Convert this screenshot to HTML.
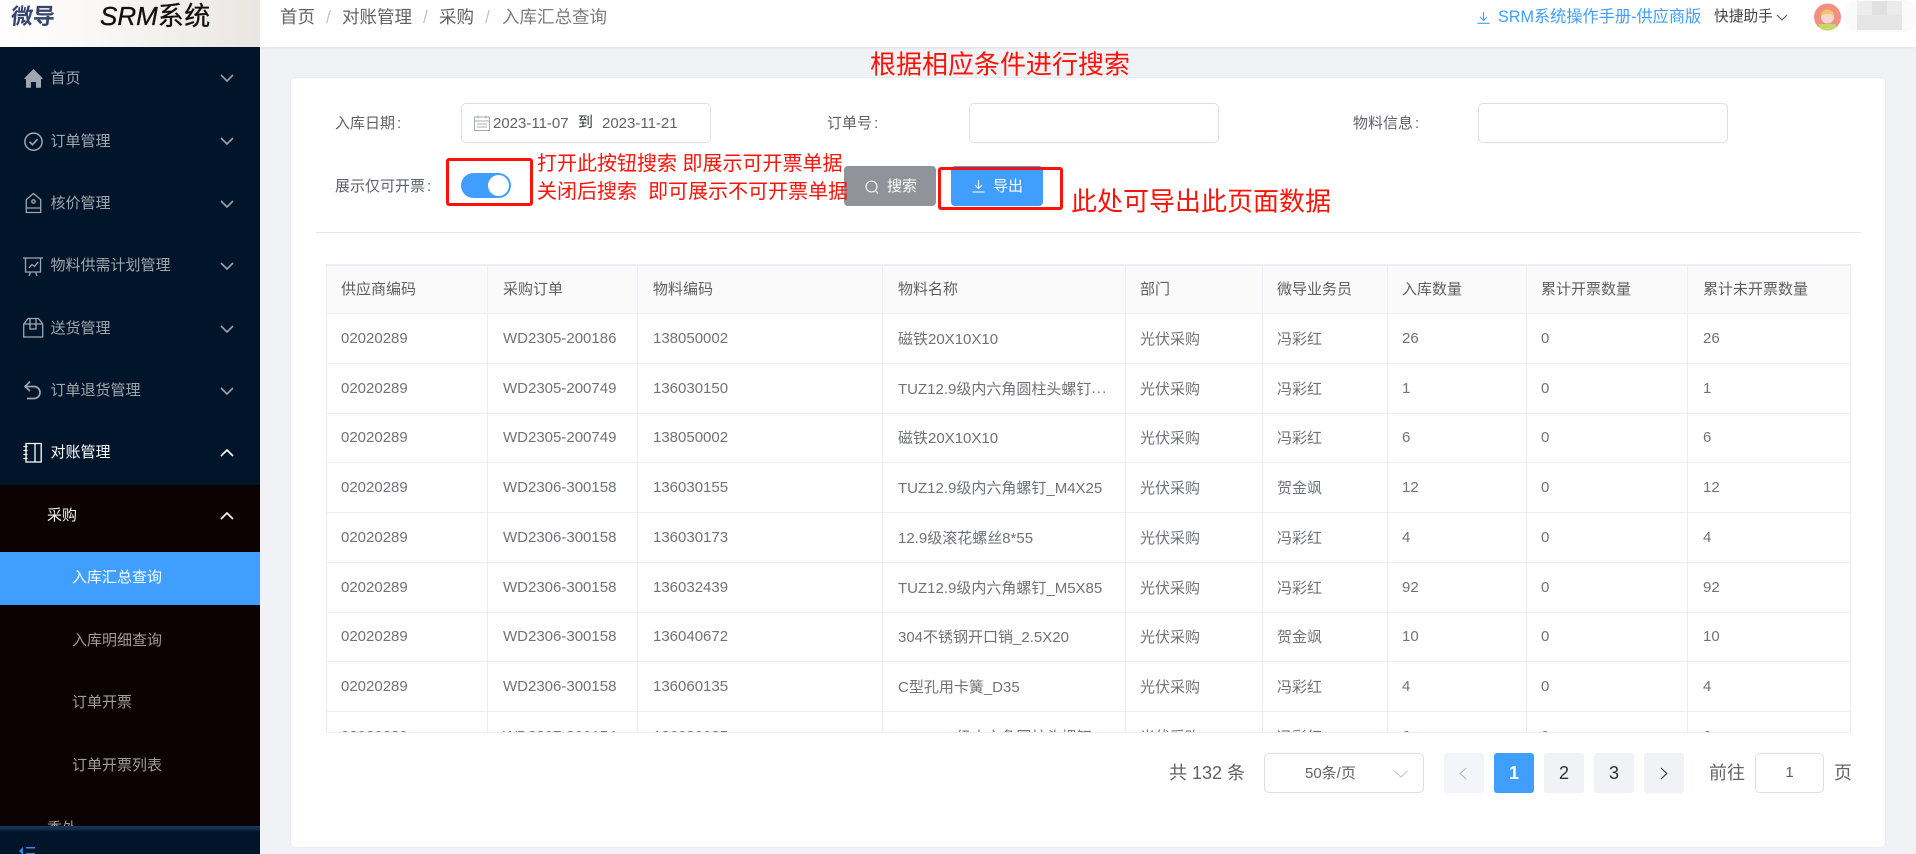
<!DOCTYPE html>
<html lang="zh"><head><meta charset="utf-8"><title>入库汇总查询</title>
<style>
*{box-sizing:border-box;margin:0;padding:0}
html,body{width:1916px;height:854px;overflow:hidden;background:#f0f2f6;font-family:"Liberation Sans","Noto Sans CJK SC",sans-serif;font-size:15px;color:#606266}
.a{position:absolute;white-space:nowrap}
.t{position:absolute;white-space:nowrap;line-height:20px;transform:translateY(-50%)}
#side{position:absolute;left:0;top:47px;width:260px;height:807px;background:#00142a;overflow:hidden}
.sub{position:absolute;left:0;top:438px;width:260px;height:369px;background:#0c0203}
.act{position:absolute;left:0;top:505px;width:260px;height:53px;background:#409eff}
.m{color:#a0a6ae}
.chev{position:absolute;left:220px;width:14px;height:8px;fill:none;stroke:#9ea3aa;stroke-width:1.6}
.ic{position:absolute;left:23px;width:22px;height:22px;fill:none;stroke:#a0a6ae;stroke-width:1.3}
.inp{position:absolute;height:40px;background:#fff;border:1px solid #dcdfe6;border-radius:5px}
.red{position:absolute;border:3px solid #fb1309;border-radius:3px}
.rt{position:absolute;white-space:nowrap;color:#fb1309;transform:translateY(-50%);line-height:1.2}
.btn{position:absolute;top:166px;width:92px;height:40px;border-radius:4px}
.row{position:absolute;left:0;width:1525px;border-bottom:1px solid #ebeef5;height:49.75px}
.c{position:absolute;top:0;bottom:0;border-left:1px solid #ebeef5;padding-left:14px;white-space:nowrap;overflow:hidden;display:flex;align-items:center;color:#707276;font-size:15px}
.c:nth-child(1){left:0;width:161px}.c:nth-child(2){left:161px;width:150px;padding-left:15px}.c:nth-child(3){left:311px;width:245px;padding-left:15px}.c:nth-child(4){left:556px;width:243px;padding-left:15px}.c:nth-child(5){left:799px;width:137px}.c:nth-child(6){left:936px;width:125px}.c:nth-child(7){left:1061px;width:139px}.c:nth-child(8){left:1200px;width:161px}.c:nth-child(9){left:1361px;width:164px;padding-left:15px;border-right:1px solid #ebeef5}
.h{background:#fafafa;height:48px;top:0}.h .c{color:#5d5f63;padding-bottom:2px}
.pg{position:absolute;top:753px;width:40px;height:40px;border-radius:3px;background:#f0f2f5;text-align:center;line-height:40px;font-size:18px;color:#303133;font-weight:500}
.col{margin-left:2px}
</style></head><body>

<!-- header -->
<div class="a" style="left:0;top:0;width:1916px;height:47px;background:#fff;box-shadow:0 1px 3px rgba(0,21,41,.08)"></div>
<div class="a" style="left:0;top:0;width:260px;height:47px;background:linear-gradient(90deg,#fff 0%,#f7f6f4 45%,#e9e6e2 100%)"></div>
<div class="t" style="left:11px;top:17px;font-size:22px;font-weight:700;color:#34466f;transform:translateY(-50%) skewX(-6deg)">微导</div>
<div class="t" style="left:100px;top:15.5px;font-size:26px;color:#111;line-height:30px;-webkit-text-stroke:.3px #111"><span style="font-style:italic">SRM</span><span style="letter-spacing:.5px">系统</span></div>

<div class="t" style="left:280px;top:17px;font-size:17.5px;color:#606266">首页</div>
<div class="t" style="left:326px;top:17px;font-size:17.5px;color:#c0c4cc">/</div>
<div class="t" style="left:342px;top:17px;font-size:17.5px;color:#606266">对账管理</div>
<div class="t" style="left:423px;top:17px;font-size:17.5px;color:#c0c4cc">/</div>
<div class="t" style="left:439px;top:17px;font-size:17.5px;color:#606266">采购</div>
<div class="t" style="left:485px;top:17px;font-size:17.5px;color:#c0c4cc">/</div>
<div class="t" style="left:502px;top:17px;font-size:17.5px;color:#7b7d82">入库汇总查询</div>

<svg class="a" style="left:1477px;top:11px;width:13px;height:13px" viewBox="0 0 13 13" fill="none" stroke="#409eff" stroke-width="1.1"><path d="M6.500 1v8M3 6l3.500 3.500L10 6M.5 12.300h12"/></svg>
<div class="t" style="left:1498px;top:17px;font-size:16.2px;color:#409eff">SRM系统操作手册-供应商版</div>
<div class="t" style="left:1714px;top:17px;font-size:14.7px;color:#444">快捷助手</div>
<svg class="a" style="left:1776px;top:14px;width:12px;height:8px" viewBox="0 0 12 8" fill="none" stroke="#555" stroke-width="1"><path d="M1 1l5 5 5-5"/></svg>
<svg class="a" style="left:1814px;top:3px;width:27px;height:28px" viewBox="0 0 27 28"><defs><clipPath id="av"><circle cx="13.500" cy="14" r="13.500"/></clipPath></defs><g clip-path="url(#av)"><rect width="27" height="28" fill="#f0917f"/><rect x="5" y="21" width="17" height="8" fill="#c5d96b"/><circle cx="13.500" cy="14" r="6.500" fill="#f7d7cd"/><path d="M7 13a6.500 6.500 0 0 1 13 0c-3-3-9-3-13 0z" fill="#f5c56b"/></g></svg>
<div class="a" style="left:1845px;top:0;width:71px;height:32px;background:#fafafa;border-radius:12px"></div>
<div class="a" style="left:1857px;top:1px;width:15px;height:14px;background:#ededed"></div>
<div class="a" style="left:1872px;top:1px;width:15px;height:14px;background:#e0e0e0"></div>
<div class="a" style="left:1887px;top:1px;width:15px;height:14px;background:#ebebeb"></div>
<div class="a" style="left:1857px;top:15px;width:45px;height:15px;background:#e6e6e6"></div>

<!-- sidebar -->
<div id="side">
<div class="sub"></div><div class="act"></div>
<div class="t m" style="left:50.500px;top:31.500px">首页</div>
<div class="t m" style="left:50.500px;top:94.500px">订单管理</div>
<div class="t m" style="left:50.500px;top:156.500px">核价管理</div>
<div class="t m" style="left:50.500px;top:219px">物料供需计划管理</div>
<div class="t m" style="left:50.500px;top:281.500px">送货管理</div>
<div class="t m" style="left:50.500px;top:344px">订单退货管理</div>
<div class="t" style="left:50.500px;top:406px;color:#fff">对账管理</div>
<div class="t" style="left:47px;top:469px;color:#f2f2f2">采购</div>
<div class="t" style="left:72px;top:531px;color:#fff">入库汇总查询</div>
<div class="t" style="left:72px;top:594px;color:#a09c9b">入库明细查询</div>
<div class="t" style="left:72px;top:655.500px;color:#a09c9b">订单开票</div>
<div class="t" style="left:72px;top:719px;color:#a09c9b">订单开票列表</div>
<div class="t" style="left:47px;top:781.500px;color:#a09c9b">委外</div>

<svg class="chev" style="top:27px" viewBox="0 0 14 8"><path d="M1 1l6 6 6-6"/></svg>
<svg class="chev" style="top:90px" viewBox="0 0 14 8"><path d="M1 1l6 6 6-6"/></svg>
<svg class="chev" style="top:153px" viewBox="0 0 14 8"><path d="M1 1l6 6 6-6"/></svg>
<svg class="chev" style="top:215px" viewBox="0 0 14 8"><path d="M1 1l6 6 6-6"/></svg>
<svg class="chev" style="top:278px" viewBox="0 0 14 8"><path d="M1 1l6 6 6-6"/></svg>
<svg class="chev" style="top:340px" viewBox="0 0 14 8"><path d="M1 1l6 6 6-6"/></svg>
<svg class="chev" style="top:402px;stroke:#fff" viewBox="0 0 14 8"><path d="M1 7l6-6 6 6"/></svg>
<svg class="chev" style="top:465px;stroke:#fff" viewBox="0 0 14 8"><path d="M1 7l6-6 6 6"/></svg>

<svg class="ic" style="top:21px" viewBox="0 0 22 22"><path fill-rule="evenodd" d="M10.500 1L1.500 10v1H3v8.700h15V11h1.500v-1zM8 19.700V14h5v5.700z" fill="#a0a6ae" stroke="none"/></svg>
<svg class="ic" style="top:84px" viewBox="0 0 22 22"><circle cx="10.500" cy="10.700" r="8.600" stroke-width="1.500"/><path d="M6.500 10.700l3 3 5-5.500" stroke-width="1.600"/></svg>
<svg class="ic" style="top:145px" viewBox="0 0 22 22"><path d="M3.300 20.500V7.500L10.500 1.500l7.200 6v13zM3.300 16h14.400"/><circle cx="10.500" cy="9.500" r="1.700"/></svg>
<svg class="ic" style="top:209px" viewBox="0 0 22 22"><path d="M0 2h20M2.500 2v14h15V2M6 20l1.500-4M14 20l-1.500-4M6 12l3-3.500 2.500 2L15 6"/></svg>
<svg class="ic" style="top:270px" viewBox="0 0 22 22"><path d="M.7 7L5 1.500h10.500L19.700 7v13H.7zM.7 7h19M7 1.500V12h6V1.500"/></svg>
<svg class="ic" style="top:333px" viewBox="0 0 22 22"><path d="M7 1.500L2 6.500l5 4.500" stroke-width="1.700"/><path d="M2.500 6.500H11a6 6 0 0 1 0 12H4" stroke-width="1.700"/></svg>
<svg class="ic" style="top:395px;stroke:#fff" viewBox="0 0 22 22"><path d="M3 1.500h15.200v18.500H3zM12 1.500v18.500M.5 4.500h4M.5 8.500h4M.5 12.500h4M.5 16.500h4"/></svg>

<div class="a" style="left:0;top:779px;width:260px;height:28px;background:linear-gradient(#1c3a57 0,#0c2a47 4px,#00142a 5px)"></div>
<svg class="a" style="left:19px;top:798px;width:18px;height:12px" viewBox="0 0 18 12" fill="#2a8cf0"><path d="M0 6l4-4v8z"/><rect x="7" y="2" width="9" height="1.500"/><rect x="7" y="8" width="9" height="1.500"/></svg>
</div>

<!-- card -->
<div class="a" style="left:290px;top:77px;width:1596px;height:771px;background:#fff;border:1px solid #e6ebf5;border-radius:5px"></div>

<div class="t" style="left:335px;top:123.500px;color:#606266">入库日期<span class="col">:</span></div>
<div class="inp" style="left:461px;top:103px;width:250px"></div>
<svg class="a" style="left:474px;top:115px;width:16px;height:16px" viewBox="0 0 16 16" fill="none" stroke="#a8abb2" stroke-width="1"><rect x=".5" y="2" width="15" height="13.500"/><path d="M.5 6h15M4 .5v3M12 .5v3M3 9h10M3 12h10" /></svg>
<div class="t" style="left:493px;top:124px;color:#606266">2023-11-07</div>
<div class="t" style="left:578px;top:123px;font-size:15px;color:#303133">到</div>
<div class="t" style="left:602px;top:124px;color:#606266">2023-11-21</div>

<div class="t" style="left:827px;top:123.500px">订单号<span class="col">:</span></div>
<div class="inp" style="left:969px;top:103px;width:250px"></div>
<div class="t" style="left:1353px;top:123.500px">物料信息<span class="col">:</span></div>
<div class="inp" style="left:1478px;top:103px;width:250px"></div>

<div class="t" style="left:335px;top:186.500px">展示仅可开票<span class="col">:</span></div>
<div class="a" style="left:461px;top:173px;width:50px;height:25px;border-radius:13px;background:#409eff"></div>
<div class="a" style="left:488px;top:175px;width:21px;height:21px;border-radius:50%;background:#fff"></div>

<div class="btn" style="left:844px;background:#909399"></div>
<svg class="a" style="left:865px;top:180px;width:14px;height:15px" viewBox="0 0 14 15" fill="none" stroke="#fff" stroke-width="1.100"><circle cx="6.500" cy="6.500" r="5.500"/><path d="M10.500 10.500l2.500 3"/></svg>
<div class="t" style="left:887px;top:186.500px;color:#fff">搜索</div>
<div class="btn" style="left:951px;background:#409eff"></div>
<svg class="a" style="left:972px;top:179px;width:13px;height:14px" viewBox="0 0 13 14" fill="none" stroke="#fff" stroke-width="1.100"><path d="M6.500 1v8M3 6l3.500 3.500L10 6M.5 13h12"/></svg>
<div class="t" style="left:993px;top:186.500px;color:#fff">导出</div>

<div class="red" style="left:446px;top:158px;width:87px;height:48px"></div>
<div class="red" style="left:938px;top:167px;width:125px;height:43px"></div>
<div class="rt" style="left:537px;top:164px;font-size:20px">打开此按钮搜索 即展示可开票单据</div>
<div class="rt" style="left:537px;top:192px;font-size:20px">关闭后搜索&nbsp; 即可展示不可开票单据</div>
<div class="rt" style="left:870px;top:65px;font-size:26px">根据相应条件进行搜索</div>
<div class="rt" style="left:1071px;top:202px;font-size:26px">此处可导出此页面数据</div>

<div class="a" style="left:316px;top:232px;width:1545px;height:1px;background:#e4e7ed"></div>

<!-- table -->
<div class="a" style="left:326px;top:264px;width:1525px;height:469px;overflow:hidden;border-top:2px solid #ebeef5;border-bottom:1px solid #ebeef5">
<div class="row h"><div class="c">供应商编码</div><div class="c">采购订单</div><div class="c">物料编码</div><div class="c">物料名称</div><div class="c">部门</div><div class="c">微导业务员</div><div class="c">入库数量</div><div class="c">累计开票数量</div><div class="c">累计未开票数量</div></div>
<div class="row" style="top:48px"><div class="c">02020289</div><div class="c">WD2305-200186</div><div class="c">138050002</div><div class="c">磁铁20X10X10</div><div class="c">光伏采购</div><div class="c">冯彩红</div><div class="c">26</div><div class="c">0</div><div class="c">26</div></div>
<div class="row" style="top:97.750px"><div class="c">02020289</div><div class="c">WD2305-200749</div><div class="c">136030150</div><div class="c">TUZ12.9级内六角圆柱头螺钉<span style="letter-spacing:1.200px">...</span></div><div class="c">光伏采购</div><div class="c">冯彩红</div><div class="c">1</div><div class="c">0</div><div class="c">1</div></div>
<div class="row" style="top:147.500px"><div class="c">02020289</div><div class="c">WD2305-200749</div><div class="c">138050002</div><div class="c">磁铁20X10X10</div><div class="c">光伏采购</div><div class="c">冯彩红</div><div class="c">6</div><div class="c">0</div><div class="c">6</div></div>
<div class="row" style="top:197.250px"><div class="c">02020289</div><div class="c">WD2306-300158</div><div class="c">136030155</div><div class="c">TUZ12.9级内六角螺钉_M4X25</div><div class="c">光伏采购</div><div class="c">贺金飒</div><div class="c">12</div><div class="c">0</div><div class="c">12</div></div>
<div class="row" style="top:247px"><div class="c">02020289</div><div class="c">WD2306-300158</div><div class="c">136030173</div><div class="c">12.9级滚花螺丝8*55</div><div class="c">光伏采购</div><div class="c">冯彩红</div><div class="c">4</div><div class="c">0</div><div class="c">4</div></div>
<div class="row" style="top:296.750px"><div class="c">02020289</div><div class="c">WD2306-300158</div><div class="c">136032439</div><div class="c">TUZ12.9级内六角螺钉_M5X85</div><div class="c">光伏采购</div><div class="c">冯彩红</div><div class="c">92</div><div class="c">0</div><div class="c">92</div></div>
<div class="row" style="top:346.500px"><div class="c">02020289</div><div class="c">WD2306-300158</div><div class="c">136040672</div><div class="c">304不锈钢开口销_2.5X20</div><div class="c">光伏采购</div><div class="c">贺金飒</div><div class="c">10</div><div class="c">0</div><div class="c">10</div></div>
<div class="row" style="top:396.250px"><div class="c">02020289</div><div class="c">WD2306-300158</div><div class="c">136060135</div><div class="c">C型孔用卡簧_D35</div><div class="c">光伏采购</div><div class="c">冯彩红</div><div class="c">4</div><div class="c">0</div><div class="c">4</div></div>
<div class="row" style="top:446px"><div class="c">02020289</div><div class="c">WD2307-300154</div><div class="c">136030085</div><div class="c">TUZ12.9级内六角圆柱头螺钉</div><div class="c">光伏采购</div><div class="c">冯彩红</div><div class="c">6</div><div class="c">0</div><div class="c">6</div></div>
</div>

<!-- pagination -->
<div class="t" style="left:1169px;top:773px;font-size:18px">共 132 条</div>
<div class="inp" style="left:1264px;top:753px;width:160px"></div>
<div class="t" style="left:1305px;top:774px;color:#606266">50条/页</div>
<svg class="a" style="left:1394px;top:770px;width:14px;height:8px" viewBox="0 0 14 8" fill="none" stroke="#c0c4cc" stroke-width="1.100"><path d="M.5 1l6.500 6 6.500-6"/></svg>
<div class="pg" style="left:1444px;background:#f4f5f8"></div>
<svg class="a" style="left:1459px;top:767px;width:8px;height:13px" viewBox="0 0 8 13" fill="none" stroke="#b4b7bd" stroke-width="1.100"><path d="M7 1L1.200 6.500 7 12"/></svg>
<div class="pg" style="left:1494px;background:#409eff;color:#fff;font-weight:700">1</div>
<div class="pg" style="left:1544px">2</div>
<div class="pg" style="left:1594px">3</div>
<div class="pg" style="left:1644px"></div>
<svg class="a" style="left:1660px;top:767px;width:8px;height:13px" viewBox="0 0 8 13" fill="none" stroke="#303133" stroke-width="1.100"><path d="M1 1l5.800 5.500L1 12"/></svg>
<div class="t" style="left:1709px;top:773px;font-size:18px">前往</div>
<div class="inp" style="left:1755px;top:753px;width:69px;text-align:center;line-height:38px;color:#606266;font-size:15px">1</div>
<div class="t" style="left:1834px;top:773px;font-size:18px">页</div>
</body></html>
